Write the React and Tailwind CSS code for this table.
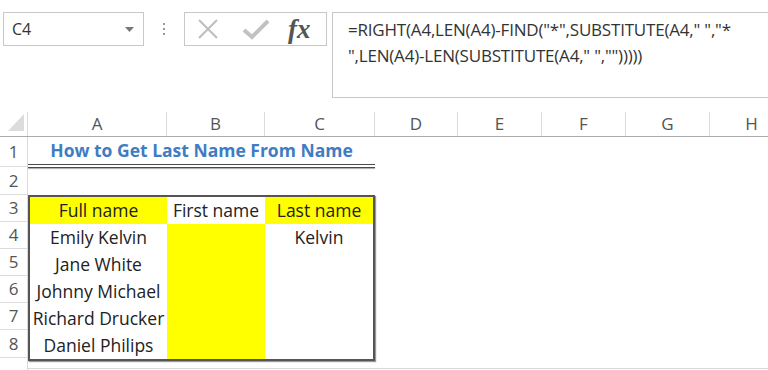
import React from "react";

const cols = [
  { k: "A", w: 139 },
  { k: "B", w: 98 },
  { k: "C", w: 110 },
  { k: "D", w: 83 },
  { k: "E", w: 84 },
  { k: "F", w: 84 },
  { k: "G", w: 84 },
  { k: "H", w: 84 },
];

const people = [
  ["Emily Kelvin", "Kelvin"],
  ["Jane White", ""],
  ["Johnny Michael", ""],
  ["Richard Drucker", ""],
  ["Daniel Philips", ""],
];

function RowNum({ n, h }) {
  return (
    <div
      className="flex items-center justify-center border-b border-[#dcdcdc] text-[17px] text-[#555]"
      style={{ height: h }}
    >
      {n}
    </div>
  );
}

export default function App() {
  return (
    <div className="relative h-[370px] w-[768px] overflow-hidden bg-white font-['Open_Sans',sans-serif] text-[#222]">
      {/* formula bar */}
      <div className="flex items-start pl-[3px] pt-[12px]">
        <div className="flex h-[34px] w-[141px] items-center justify-between border border-[#c8c8c8] pl-[8px] pr-[9px]">
          <span className="text-[16px] text-[#333]">C4</span>
          <svg width="9" height="5" viewBox="0 0 9 5">
            <path d="M0 0h9L4.5 5z" fill="#777" />
          </svg>
        </div>
        <div className="flex h-[34px] w-[40px] flex-col items-center justify-center gap-[3px]">
          <span className="h-[2px] w-[2px] bg-[#9a9a9a]" />
          <span className="h-[2px] w-[2px] bg-[#9a9a9a]" />
          <span className="h-[2px] w-[2px] bg-[#9a9a9a]" />
        </div>
        <div className="flex h-[34px] w-[143px] items-center border border-[#c8c8c8]">
          <svg className="ml-[12px]" width="22" height="22" viewBox="0 0 22 22">
            <path d="M2 2L20 20M20 2L2 20" stroke="#bdbdbd" strokeWidth="2" />
          </svg>
          <svg className="ml-[23px]" width="28" height="22" viewBox="0 0 28 22">
            <path d="M2 12L10 19L26 3" stroke="#c2c2c2" strokeWidth="4" fill="none" />
          </svg>
          <span className="ml-[18px] font-['Liberation_Serif',serif] text-[27px] font-bold italic leading-none text-[#555]">
            fx
          </span>
        </div>
        <div className="ml-[5px] h-[86px] flex-1 border-y border-l border-[#c8c8c8] pl-[15px] pt-[4px] text-[17px] leading-[26px] text-[#333] tracking-[-0.2px]">
          <div className="whitespace-nowrap">=RIGHT(A4,LEN(A4)-FIND("*",SUBSTITUTE(A4," ","*</div>
          <div className="whitespace-nowrap">",LEN(A4)-LEN(SUBSTITUTE(A4," ","")))))</div>
        </div>
      </div>

      {/* sheet */}
      <div className="mt-[14px]">
        {/* column headers */}
        <div className="flex h-[25px] border-b border-[#ababab]">
          <div className="relative w-[28px] shrink-0 border-r border-[#dadada]">
            <svg className="absolute left-[8px] top-[2px]" width="16" height="17" viewBox="0 0 16 17">
              <path d="M16 0V17H0z" fill="#dcdcdc" />
            </svg>
          </div>
          {cols.map((c) => (
            <div
              key={c.k}
              className="flex shrink-0 items-center justify-center border-r border-[#dadada] text-[17px] text-[#555]"
              style={{ width: c.w }}
            >
              {c.k}
            </div>
          ))}
        </div>

        <div className="flex">
          {/* row numbers */}
          <div className="w-[28px] shrink-0 border-r border-[#dadada]">
            <RowNum n="1" h={30} />
            <RowNum n="2" h={28} />
            <RowNum n="3" h={27} />
            <RowNum n="4" h={27} />
            <RowNum n="5" h={27} />
            <RowNum n="6" h={27} />
            <RowNum n="7" h={27} />
            <RowNum n="8" h={28} />
            <div className="h-[20px]" />
          </div>

          {/* A:C block */}
          <div className="w-[347px] shrink-0">
            <div className="flex h-[27px] items-center justify-center whitespace-nowrap text-[17.5px] font-bold text-[#3f7cc3]">
              How to Get Last Name From Name
            </div>
            <div className="h-[4px] border-y border-[#4a4a4a] shadow-[0_1px_1px_#aaa]" />
            <div className="h-[27px]" />
            <div className="border-2 border-[#555] shadow-[1px_1px_1px_#999]">
              <div className="flex h-[27px] text-[17.5px]">
                <div className="flex w-[137px] items-center justify-center bg-[#ffff00]">Full name</div>
                <div className="flex w-[98px] items-center justify-center whitespace-nowrap">First name</div>
                <div className="flex flex-1 items-center justify-center bg-[#ffff00]">Last name</div>
              </div>
              {people.map(([full, last]) => (
                <div key={full} className="flex h-[27px] text-[17.5px]">
                  <div className="flex w-[137px] items-center justify-center whitespace-nowrap">{full}</div>
                  <div className="w-[98px] bg-[#ffff00]" />
                  <div className="flex flex-1 items-center justify-center">{last}</div>
                </div>
              ))}
            </div>
          </div>
        </div>
      </div>

      <div className="absolute bottom-[1px] left-[28px] right-0 h-px bg-[#d8d8d8]" />
    </div>
  );
}
